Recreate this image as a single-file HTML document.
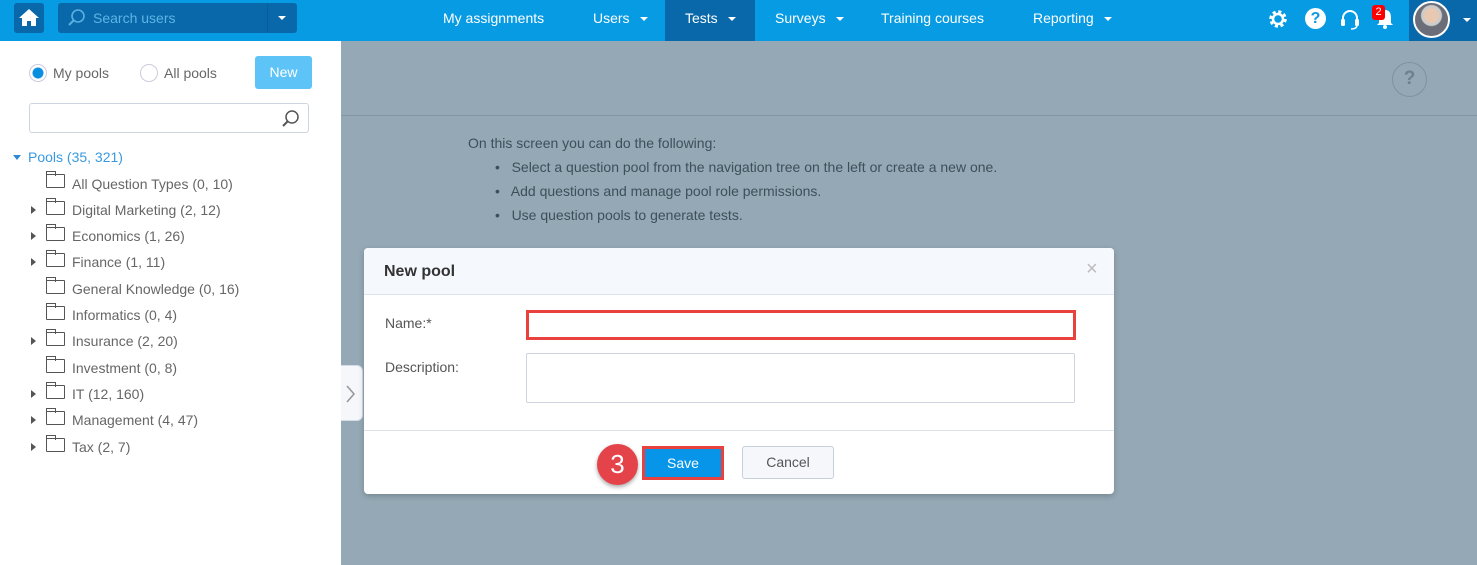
<!DOCTYPE html>
<html><head><style>
*{box-sizing:border-box;margin:0;padding:0}
body{width:1477px;height:565px;overflow:hidden;font-family:"Liberation Sans",sans-serif;background:#94a8b5;position:relative}
.nav{position:absolute;left:0;top:0;width:1477px;height:41px;background:#079be3}
.abs{position:absolute}
.navi{position:absolute;top:0;height:41px;line-height:37px;color:#fff;font-size:14px}
.car{display:inline-block;width:0;height:0;border-left:4px solid transparent;border-right:4px solid transparent;border-top:4px solid #fff;margin-left:10px;vertical-align:middle}
.left{position:absolute;left:0;top:41px;width:341px;height:524px;background:#fff}
.tree{position:absolute;left:72px;font-size:14px;color:#666;white-space:nowrap}
.fold{position:absolute;left:46px;width:19px;height:14px;border:1px solid #555;border-radius:1px}
.fold:before{content:"";position:absolute;left:-1px;top:-4px;width:8px;height:4px;border:1px solid #555;border-bottom:none}
.tri{position:absolute;left:31px;width:0;height:0;border-top:4px solid transparent;border-bottom:4px solid transparent;border-left:5px solid #555}
</style></head><body>
<div class="nav">
 <div class="abs" style="left:14px;top:3px;width:30px;height:30px;background:#0968aa;border-radius:3px">
  <svg width="30" height="30" viewBox="0 0 30 30"><path d="M15 6 L5 15 H8 V23 H13 V18 H17 V23 H22 V15 H25 Z" fill="#fff"/></svg></div>
 <div class="abs" style="left:58px;top:3px;width:239px;height:30px;background:#0968aa;border-radius:3px">
  <svg class="abs" style="left:8px;top:5px" width="20" height="20" viewBox="0 0 20 20"><circle cx="12" cy="8" r="6" fill="none" stroke="#5ab0e0" stroke-width="1.6"/><path d="M8 12 L3 17" stroke="#5ab0e0" stroke-width="2"/></svg>
  <span class="abs" style="left:35px;top:7px;font-size:14px;color:#5fb4e4">Search users</span>
  <div class="abs" style="left:209px;top:0;width:1px;height:30px;background:#0b5d96"></div>
  <div class="abs" style="left:220px;top:13px;border-left:4px solid transparent;border-right:4px solid transparent;border-top:4px solid #fff"></div>
 </div>
 <div class="navi" style="left:443px">My assignments</div>
 <div class="navi" style="left:593px">Users<span class="car"></span></div>
 <div class="navi" style="left:665px;width:90px;background:#0968aa;padding-left:20px">Tests<span class="car"></span></div>
 <div class="navi" style="left:775px">Surveys<span class="car"></span></div>
 <div class="navi" style="left:881px">Training courses</div>
 <div class="navi" style="left:1033px">Reporting<span class="car"></span></div>
 <svg class="abs" style="left:1267px;top:8px" width="22" height="22" viewBox="0 0 22 22"><circle cx="11" cy="11" r="7" fill="none" stroke="#fff" stroke-width="3.5" stroke-dasharray="3 2.5"/><circle cx="11" cy="11" r="5" fill="none" stroke="#fff" stroke-width="2.5"/></svg>
 <div class="abs" style="left:1305px;top:8px;width:21px;height:21px;border-radius:50%;background:#fff;color:#079be3;font-weight:bold;font-size:16px;text-align:center;line-height:21px">?</div>
 <svg class="abs" style="left:1339px;top:7px" width="22" height="24" viewBox="0 0 22 24"><path d="M4 14 V11 A7 7 0 0 1 18 11 V14" fill="none" stroke="#fff" stroke-width="2"/><rect x="2" y="12" width="4" height="7" rx="1.5" fill="#fff"/><rect x="16" y="12" width="4" height="7" rx="1.5" fill="#fff"/><path d="M18 19 Q17 22 12 22" fill="none" stroke="#fff" stroke-width="1.5"/></svg>
 <svg class="abs" style="left:1374px;top:7px" width="22" height="24" viewBox="0 0 22 24"><path d="M11 3 C6 3 5 7 5 11 V16 L3 18 H19 L17 16 V11 C17 7 16 3 11 3Z" fill="#fff"/><circle cx="11" cy="20" r="2" fill="#fff"/></svg>
 <div class="abs" style="left:1372px;top:5px;width:13px;height:15px;background:#f00;border-radius:3px;color:#fff;font-size:11px;text-align:center;line-height:15px">2</div>
 <div class="abs" style="left:1409px;top:0;width:68px;height:41px;background:#0968aa">
  <div class="abs" style="left:4px;top:1px;width:37px;height:37px;border-radius:50%;border:2px solid #fff;background:radial-gradient(circle at 50% 38%,#e8c8b0 0 7px,#ccc 8px 10px,#6b6e78 11px)"></div>
  <div class="abs" style="left:54px;top:18px;border-left:4px solid transparent;border-right:4px solid transparent;border-top:4px solid #fff"></div>
 </div>
</div>
<div class="abs" style="left:341px;top:115px;width:1136px;height:1px;background:#8397a3"></div>
<div class="abs" style="left:1392px;top:62px;width:35px;height:35px;border-radius:50%;border:1.5px solid #7f939f;color:#6f818c;font-weight:bold;font-size:19px;text-align:center;line-height:32px">?</div>
<div class="abs" style="left:468px;top:131px;font-size:14px;color:#3e4f5a;line-height:24px">On this screen you can do the following:
<ul style="margin-left:27px;list-style:none">
<li>•&nbsp;&nbsp; Select a question pool from the navigation tree on the left or create a new one.</li>
<li>•&nbsp;&nbsp; Add questions and manage pool role permissions.</li>
<li>•&nbsp;&nbsp; Use question pools to generate tests.</li></ul></div>
<div class="left">
 <div class="abs" style="left:29px;top:23px;width:18px;height:18px;border-radius:50%;border:1px solid #ccd;background:radial-gradient(#0a8fe0 0 5px,#fff 6px)"></div>
 <span class="abs" style="left:53px;top:24px;font-size:14px;color:#666">My pools</span>
 <div class="abs" style="left:140px;top:23px;width:18px;height:18px;border-radius:50%;border:1px solid #ccd"></div>
 <span class="abs" style="left:164px;top:24px;font-size:14px;color:#666">All pools</span>
 <div class="abs" style="left:255px;top:15px;width:57px;height:33px;background:#5ec4f8;border-radius:3px;color:#fff;font-size:14px;text-align:center;line-height:33px">New</div>
 <div class="abs" style="left:29px;top:62px;width:280px;height:30px;border:1px solid #cdd5e0;border-radius:3px">
  <svg class="abs" style="left:251px;top:5px" width="20" height="20" viewBox="0 0 20 20"><circle cx="11" cy="8" r="6" fill="none" stroke="#555" stroke-width="1.5"/><path d="M7 12 L2 17" stroke="#555" stroke-width="2"/></svg></div>
 <div class="abs" style="left:13px;top:114px;border-left:4px solid transparent;border-right:4px solid transparent;border-top:5px solid #2a8ad8"></div>
 <span class="abs" style="left:28px;top:108px;font-size:14px;color:#3a9ae0">Pools (35, 321)</span>
</div>
<div class="abs" style="left:341px;top:365px;width:22px;height:56px;background:#f5f7fb;border:1px solid #d5dbe5;border-left:none;border-radius:0 6px 6px 0">
 <svg width="20" height="56" viewBox="0 0 20 56"><path d="M6 20 L13 28 L6 36" fill="none" stroke="#999" stroke-width="1.6"/></svg></div>
<div class="abs" style="left:364px;top:248px;width:750px;height:246px;background:#fff;border-radius:4px;box-shadow:0 2px 6px rgba(0,0,0,.2);overflow:hidden">
 <div style="height:47px;background:#f5f8fd;border-bottom:1px solid #dde3ec;font-weight:bold;font-size:16px;color:#333;padding:15px 20px">New pool</div>
 <span class="abs" style="left:722px;top:10px;font-size:20px;color:#bbb">×</span>
 <span class="abs" style="left:21px;top:67px;font-size:14px;color:#555">Name:*</span>
 <div class="abs" style="left:162px;top:62px;width:550px;height:30px;border:3px solid #e8413e"></div>
 <span class="abs" style="left:21px;top:111px;font-size:14px;color:#555">Description:</span>
 <div class="abs" style="left:162px;top:105px;width:549px;height:50px;border:1px solid #cdd5e0;border-radius:2px"></div>
 <div class="abs" style="left:0;top:182px;width:750px;height:1px;background:#dde3ec"></div>
 <div class="abs" style="left:233px;top:196px;width:41px;height:41px;border-radius:50%;background:#e5434a;box-shadow:0 2px 4px rgba(0,0,0,.35);color:#fff;font-size:26px;text-align:center;line-height:41px">3</div>
 <div class="abs" style="left:278px;top:198px;width:82px;height:34px;border:3px solid #e8413e;background:#0795ea;color:#fff;font-size:14px;text-align:center;line-height:28px">Save</div>
 <div class="abs" style="left:378px;top:198px;width:92px;height:33px;border:1px solid #c8d0dc;border-radius:3px;background:#f5f7fb;color:#555;font-size:14px;text-align:center;line-height:31px">Cancel</div>
</div>
<div class="abs" style="left:0;top:0;width:341px">
 <div class="fold" style="top:174px"></div><span class="tree" style="top:176px">All Question Types (0, 10)</span>
 <div class="tri" style="top:206px"></div><div class="fold" style="top:201px"></div><span class="tree" style="top:202px">Digital Marketing (2, 12)</span>
 <div class="tri" style="top:232px"></div><div class="fold" style="top:227px"></div><span class="tree" style="top:228px">Economics (1, 26)</span>
 <div class="tri" style="top:258px"></div><div class="fold" style="top:253px"></div><span class="tree" style="top:254px">Finance (1, 11)</span>
 <div class="fold" style="top:280px"></div><span class="tree" style="top:281px">General Knowledge (0, 16)</span>
 <div class="fold" style="top:306px"></div><span class="tree" style="top:307px">Informatics (0, 4)</span>
 <div class="tri" style="top:337px"></div><div class="fold" style="top:332px"></div><span class="tree" style="top:333px">Insurance (2, 20)</span>
 <div class="fold" style="top:359px"></div><span class="tree" style="top:360px">Investment (0, 8)</span>
 <div class="tri" style="top:390px"></div><div class="fold" style="top:385px"></div><span class="tree" style="top:386px">IT (12, 160)</span>
 <div class="tri" style="top:416px"></div><div class="fold" style="top:411px"></div><span class="tree" style="top:412px">Management (4, 47)</span>
 <div class="tri" style="top:443px"></div><div class="fold" style="top:438px"></div><span class="tree" style="top:439px">Tax (2, 7)</span>
</div>
</body></html>
